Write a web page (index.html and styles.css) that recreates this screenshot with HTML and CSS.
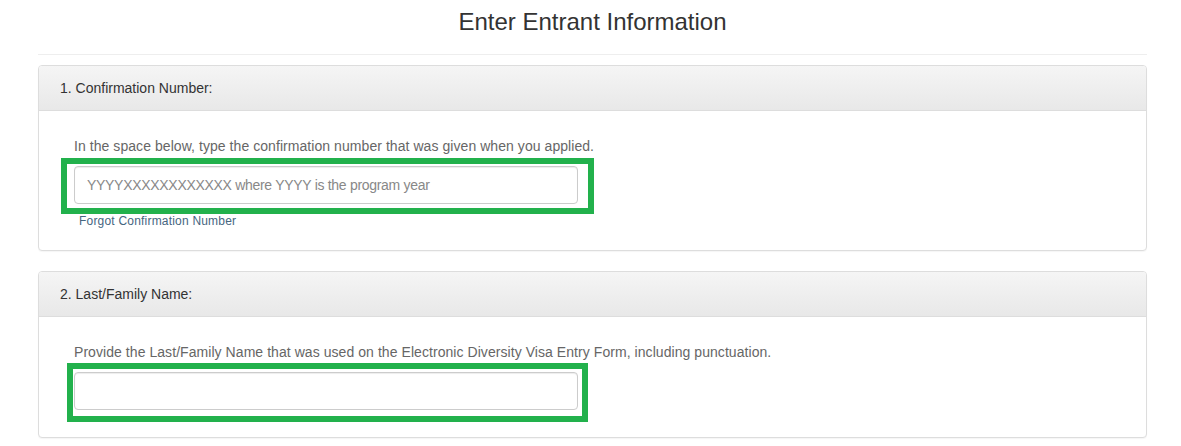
FILE: index.html
```html
<html>
<head>
    <meta http-equiv="Content-Type" content="text/html; charset=UTF-8">
    <meta name="viewport" content="width=device-width, initial-scale=1.0">
    <title>Enter Entrant Information</title>
    <link rel="stylesheet" href="styles.css">
</head>

<body>
    <div class="container">
        <h1 class="pagetitle">Enter Entrant Information</h1>
        <hr class="divider">

        <div class="panel">
            <div class="panelheading">1. Confirmation Number:</div>
            <div class="panelbody">
                <p class="hint">In the space below, type the confirmation number that was given when you applied.</p>
                <div class="field">
                    <input class="textinput" type="text" placeholder="YYYYXXXXXXXXXXXX where YYYY is the program year">
                    <span class="mark markfirst"></span>
                </div>
                <a class="forgot" href="#">Forgot Confirmation Number</a>
            </div>
        </div>

        <div class="panel">
            <div class="panelheading">2. Last/Family Name:</div>
            <div class="panelbody">
                <p class="hint">Provide the Last/Family Name that was used on the Electronic Diversity Visa Entry Form, including punctuation.</p>
                <div class="field fieldlast">
                    <input class="textinput" type="text">
                    <span class="mark marksecond"></span>
                </div>
            </div>
        </div>
    </div>
</body>
</html>
```

FILE: styles.css
```css
* {
    margin: 0;
    padding: 0;
    box-sizing: border-box;
}

body {
    background: white;
    font-family: "Liberation Sans", Arial, sans-serif;
    font-size: 14px;
    line-height: 20px;
    color: #333;
}

.container {
    width: 1109px;
    margin-left: 38px;
}

.pagetitle {
    font-size: 24px;
    font-weight: normal;
    line-height: 26px;
    color: #333;
    text-align: center;
    margin-top: 9px;
}

.divider {
    border: 0;
    border-top: 1px solid #eee;
    margin-top: 19px;
    margin-bottom: 10px;
}

.panel {
    border: 1px solid #ddd;
    border-radius: 4px;
    background: white;
    margin-bottom: 20px;
    box-shadow: 0 1px 1px rgba(0, 0, 0, 0.04);
}

.panelheading {
    padding: 12px 21px;
    height: 45px;
    line-height: 20px;
    color: #333;
    border-bottom: 1px solid #ddd;
    border-radius: 3px 3px 0 0;
    background: linear-gradient(to bottom, #f5f5f5 0%, #e8e8e8 100%);
}

.panelbody {
    padding: 25px 20px 20px 35px;
}

.hint {
    color: #666;
    letter-spacing: 0.06px;
    margin-bottom: 10px;
}

.field {
    position: relative;
    width: 504px;
    height: 38px;
}

.fieldlast {
    margin-bottom: 7px;
}

.textinput {
    display: block;
    width: 100%;
    height: 100%;
    padding: 6px 12px;
    font-family: "Liberation Sans", Arial, sans-serif;
    font-size: 14px;
    color: #555;
    background: white;
    border: 1px solid #ccc;
    border-radius: 4px;
    box-shadow: inset 0 1px 1px rgba(0, 0, 0, 0.075);
    outline: none;
}

.textinput::placeholder {
    color: #888;
    letter-spacing: -0.3px;
}

/* green annotation frames drawn over the inputs */
.mark {
    position: absolute;
    border: 6px solid #22b14c;
    pointer-events: none;
}

.markfirst {
    left: -13px;
    right: -16px;
    top: -8px;
    bottom: -10px;
}

.marksecond {
    left: -7px;
    right: -10px;
    top: -9px;
    bottom: -12px;
}

.forgot {
    display: block;
    margin-top: 9px;
    padding-left: 5px;
    font-size: 12px;
    letter-spacing: 0.2px;
    line-height: 17px;
    color: #46667f;
    text-decoration: none;
}
```
